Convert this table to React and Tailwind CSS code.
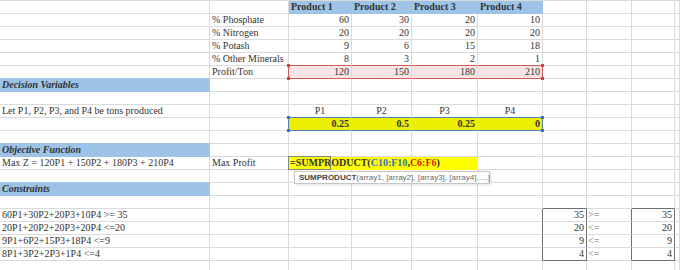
import React from "react";

const WS = [
  "w-[210px]",
  "w-[79px]",
  "w-[63px]",
  "w-[60px]",
  "w-[66px]",
  "w-[65px]",
  "w-[44px]",
  "w-[45px]",
  "w-[43px]",
  "flex-1 min-w-0",
];

const GR = "border-r-[#dadada]";
const GB = "border-b-[#dadada]";

function Cell({ w, r = GR, b = GB, className = "", children }) {
  return (
    <div
      className={`${w} h-[13px] shrink-0 border-r border-b ${r} ${b} px-[2px] text-[10px] leading-[12px] whitespace-nowrap text-[#333] ${className}`}
    >
      {children}
    </div>
  );
}

function Row({ cells = {} }) {
  return (
    <div className="flex">
      {WS.map((w, i) => {
        const c = cells[i] || {};
        return (
          <Cell key={i} w={w} r={c.r} b={c.b} className={c.cls || ""}>
            {c.t}
          </Cell>
        );
      })}
    </div>
  );
}

const BLUE = "bg-[#9dc3e6]";
const BLUE_R = "border-r-[#9dc3e6]";
const BLUE_B = "border-b-[#9dc3e6]";
const RED_R = "border-r-[#cf5b5b]";
const RED_B = "border-b-[#cf5b5b]";
const PINK_R = "border-r-[#ecd3d3]";
const HL_R = "border-r-[#4f7fc8]";
const HL_B = "border-b-[#4f7fc8]";
const YEL_R = "border-r-[#ecf000]";
const DK_R = "border-r-[#6e6e6e]";
const DK_B = "border-b-[#6e6e6e]";

const header = (t) => ({
  t,
  cls: `${BLUE} font-bold text-[#1b1f3b]`,
  r: BLUE_R,
  b: BLUE_B,
});

const banner = (t) => ({
  t,
  cls: `${BLUE} font-bold italic text-[#1c2340]`,
  r: BLUE_R,
  b: BLUE_B,
});

const num = (t, extra = {}) => ({ t, cls: "text-right", ...extra });

function Sq({ pos, color }) {
  return <span className={`absolute z-10 h-[3px] w-[3px] ${pos} ${color}`} />;
}

const pinkCell = (t, isLast, corners) => ({
  t: (
    <>
      {t}
      {corners}
    </>
  ),
  cls: "text-right bg-[#fae4e4] relative",
  r: isLast ? RED_R : PINK_R,
  b: RED_B,
});

const yelCell = (t, isLast, corners) => ({
  t: (
    <>
      {t}
      {corners}
    </>
  ),
  cls: "text-right font-bold text-[#222] bg-[#ecf000] relative",
  r: isLast ? HL_R : YEL_R,
  b: HL_B,
});

export default function App() {
  return (
    <div className="h-[270px] w-[680px] overflow-hidden border-t border-t-[#dadada] bg-white font-['Liberation_Serif',serif]">
      <Row
        cells={{
          2: header("Product 1"),
          3: header("Product 2"),
          4: header("Product 3"),
          5: header("Product 4"),
        }}
      />
      <Row cells={{ 1: { t: "% Phosphate" }, 2: num("60"), 3: num("30"), 4: num("20"), 5: num("10") }} />
      <Row cells={{ 1: { t: "% Nitrogen" }, 2: num("20"), 3: num("20"), 4: num("20"), 5: num("20") }} />
      <Row cells={{ 1: { t: "% Potash" }, 2: num("9"), 3: num("6"), 4: num("15"), 5: num("18") }} />
      <Row
        cells={{
          1: { t: "% Other Minerals" },
          2: num("8", { b: RED_B }),
          3: num("3", { b: RED_B }),
          4: num("2", { b: RED_B }),
          5: num("1", { b: RED_B }),
        }}
      />
      <Row
        cells={{
          0: { b: BLUE_B },
          1: { t: "Profit/Ton", r: RED_R },
          2: pinkCell(
            "120",
            false,
            <>
              <Sq pos="-left-[2px] -top-[2px]" color="bg-[#cf4040]" />
              <Sq pos="-left-[2px] -bottom-[2px]" color="bg-[#cf4040]" />
            </>
          ),
          3: pinkCell("150", false, null),
          4: pinkCell("180", false, null),
          5: pinkCell(
            "210",
            true,
            <>
              <Sq pos="-right-[2px] -top-[2px]" color="bg-[#cf4040]" />
              <Sq pos="-right-[2px] -bottom-[2px]" color="bg-[#cf4040]" />
            </>
          ),
        }}
      />
      <Row cells={{ 0: banner("Decision Variables") }} />
      <Row />
      <Row
        cells={{
          0: { t: "Let P1, P2, P3, and P4 be tons produced" },
          2: { t: "P1", cls: "text-center", b: HL_B },
          3: { t: "P2", cls: "text-center", b: HL_B },
          4: { t: "P3", cls: "text-center", b: HL_B },
          5: { t: "P4", cls: "text-center", b: HL_B },
        }}
      />
      <Row
        cells={{
          1: { r: HL_R },
          2: yelCell(
            "0.25",
            false,
            <>
              <Sq pos="-left-[2px] -top-[2px]" color="bg-[#3f6fc0]" />
              <Sq pos="-left-[2px] -bottom-[2px]" color="bg-[#3f6fc0]" />
            </>
          ),
          3: yelCell("0.5", false, null),
          4: yelCell("0.25", false, null),
          5: yelCell(
            "0",
            true,
            <>
              <Sq pos="-right-[2px] -top-[2px]" color="bg-[#3f6fc0]" />
              <Sq pos="-right-[2px] -bottom-[2px]" color="bg-[#3f6fc0]" />
            </>
          ),
        }}
      />
      <Row cells={{ 0: { b: BLUE_B } }} />
      <Row cells={{ 0: banner("Objective Function") }} />

      {/* Row 13 with formula */}
      <div className="flex">
        <Cell w="w-[210px]">Max Z = 120P1 + 150P2 + 180P3 + 210P4</Cell>
        <Cell w="w-[79px]">Max Profit</Cell>
        <Cell
          w="w-[189px]"
          r="border-r-[#ffff00]"
          b="border-b-[#ffff00]"
          className="relative bg-[#ffff00] pl-[1px] font-bold text-[#1e1e1e]"
        >
          <span className="absolute -left-[1px] -top-[1px] h-[14px] w-[43px] border border-[#7d877d]" />
          =SUMPRODUCT(<span className="text-[#2f6fc4]">C10:F10</span>,
          <span className="text-[#d41c1c]">C6:F6</span>)
        </Cell>
        <Cell w="w-[65px]" />
        <Cell w="w-[44px]" />
        <Cell w="w-[45px]" />
        <Cell w="w-[43px]" />
        <Cell w="flex-1 min-w-0" />
      </div>

      {/* Row 14 with tooltip */}
      <Row
        cells={{
          0: { b: BLUE_B },
          2: {
            cls: "relative",
            t: (
              <div className="absolute left-[5px] top-[1px] z-20 h-[13px] w-[196px] border border-[#c6c6c6] bg-white pl-[4px] font-['Liberation_Sans',sans-serif] text-[8px] leading-[11px] text-[#6a6a6a] shadow-[1px_1px_2px_rgba(0,0,0,0.12)]">
                <span className="font-bold text-[#444]">SUMPRODUCT</span>(array1, [array2], [array3], [array4], ...)
              </div>
            ),
          },
        }}
      />
      <Row cells={{ 0: banner("Constraints") }} />
      <Row cells={{ 6: { b: DK_B }, 8: { b: DK_B } }} />
      {[
        ["60P1+30P2+20P3+10P4 >= 35", "35", ">=", "35"],
        ["20P1+20P2+20P3+20P4 <=20", "20", "<=", "20"],
        ["9P1+6P2+15P3+18P4 <=9", "9", "<=", "9"],
        ["8P1+3P2+2P3+1P4 <=4", "4", "<=", "4"],
      ].map((r, i) => (
        <Row
          key={i}
          cells={{
            0: { t: r[0] },
            5: { r: DK_R },
            6: { t: r[1], cls: "text-right", r: DK_R, b: i === 3 ? DK_B : GB },
            7: { t: r[2], cls: "text-[#707070] pl-[1px]", r: DK_R },
            8: { t: r[3], cls: "text-right", r: DK_R, b: i === 3 ? DK_B : GB },
          }}
        />
      ))}
      <Row />
    </div>
  );
}
